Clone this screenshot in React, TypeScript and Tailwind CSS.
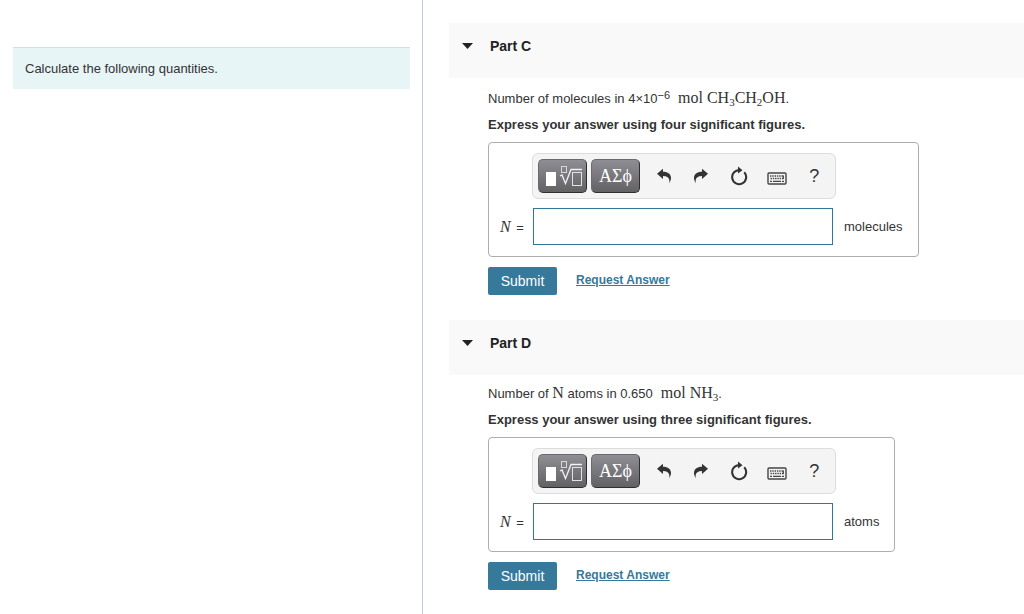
import { useState, type ReactNode } from "react";

const sans = "font-['Liberation_Sans',Arial,sans-serif]";
const serif = "font-['Liberation_Serif','Times_New_Roman',serif]";

function TemplatesIcon() {
  return (
    <svg width="39" height="24" viewBox="0 0 39 24" fill="none" aria-hidden="true">
      <rect x="3" y="8" width="10" height="14" fill="#fff" />
      <rect x="18.5" y="2.5" width="5" height="6" stroke="#d8d8da" />
      <path d="M17 12l2-1 3.5 8.5L28 5.5h12" stroke="#f2f2f2" strokeWidth="1.3" />
      <rect x="29.5" y="8.5" width="9" height="13" stroke="#e2e2e4" />
    </svg>
  );
}

function ArrowIcon({ flip = false }: { flip?: boolean }) {
  return (
    <svg width="14" height="16" viewBox="0 0 14 16" fill="#333" className={flip ? "-scale-x-100" : ""} aria-hidden="true">
      <path d="M0 5.8L6 .8v3c5 0 8 2.400 8 6.300 0 2-.8 3.700-2 5.200.3-1 .5-2 .4-3-.3-2.600-2.400-4.400-6.400-4.400v3z" />
    </svg>
  );
}

function ResetIcon() {
  return (
    <svg width="18" height="20" viewBox="0 0 18 20" fill="none" aria-hidden="true">
      <path d="M10 4.200A7 7 0 1 0 14.200 6.300" stroke="#333" strokeWidth="2.100" />
      <path d="M8 .6L12.500 4.200 8 7.600z" fill="#333" />
    </svg>
  );
}

function KeyboardIcon() {
  return (
    <svg width="20" height="13" viewBox="0 0 20 13" fill="none" aria-hidden="true">
      <rect x="1" y="1" width="18" height="11" rx="1" stroke="#444" strokeWidth="1.400" />
      <path d="M3 4h14M3.500 6.500h13" stroke="#444" strokeWidth="1.300" strokeDasharray="1.400 .9" />
      <path d="M16.300 3.400v3.500" stroke="#444" strokeWidth="1.200" />
      <path d="M3 9.300h2M6 9.300h8M15 9.300h2" stroke="#444" strokeWidth="1.200" />
    </svg>
  );
}

function Toolbar() {
  const dark =
    "flex h-[34px] w-[49px] items-center justify-center rounded-[5px] border border-t-[#6a6a6e] border-l-[#6a6a6e] border-r-[#2f2f31] border-b-[#2f2f31] bg-linear-to-b from-[#8f8e94] to-[#626265] text-white";
  const plain = "flex h-8 flex-1 items-center justify-center";

  return (
    <div className="flex h-[46px] w-[304px] items-center rounded-[6px] border border-[#dcdcdc] bg-[#f4f4f4] pr-[2px] pl-[5px]">
      <button type="button" aria-label="Templates" className={dark}>
        <TemplatesIcon />
      </button>
      <button type="button" aria-label="Symbols" className={`${dark} ${serif} ml-1 text-[18px]`}>
        ΑΣϕ
      </button>
      <div className="ml-[5px] flex flex-1 items-center">
        <button type="button" aria-label="Undo" className={plain}>
          <ArrowIcon />
        </button>
        <button type="button" aria-label="Redo" className={plain}>
          <ArrowIcon flip />
        </button>
        <button type="button" aria-label="Reset" className={plain}>
          <ResetIcon />
        </button>
        <button type="button" aria-label="Keyboard shortcuts" className={`${plain} pt-1`}>
          <KeyboardIcon />
        </button>
        <button type="button" aria-label="Help" className={`${plain} text-[18px]`}>
          ?
        </button>
      </div>
    </div>
  );
}

type PartProps = {
  id: string;
  title: string;
  question: ReactNode;
  hint: string;
  unit: string;
};

function Part({ id, title, question, hint, unit }: PartProps) {
  const [open, setOpen] = useState(true);
  const [answer, setAnswer] = useState("");

  return (
    <section className="pb-[25px]">
      <h2 className="h-[55px] bg-[#f9f9f9] pt-[13px] pl-[13px]">
        <button type="button" aria-expanded={open} onClick={() => setOpen(!open)} className="flex items-center text-[14px] leading-5 font-bold text-[#222]">
          <svg width="11" height="6" viewBox="0 0 11 6" aria-hidden="true">
            <path d="M0 0h11L5.500 6z" fill="#222" />
          </svg>
          <span className="ml-[17px]">{title}</span>
        </button>
      </h2>

      {open && (
        <div className="pt-2 pl-[39px]">
          {question}
          <p className="mt-[7px] leading-5 font-bold">{hint}</p>

          <div className="mt-[7px] w-fit rounded-[4px] border border-[#adadad] pt-[10px] pr-[15px] pb-[11px] pl-[11px]">
            <div className="ml-8">
              <Toolbar />
            </div>
            <div className="mt-[9px] flex items-center">
              <label htmlFor={id} className="w-[33px]">
                <i className={`${serif} mr-[2px] text-[16px]`}>N</i> =
              </label>
              <input
                id={id}
                value={answer}
                onChange={(e) => setAnswer(e.target.value)}
                className="h-[37px] w-[300px] border border-[#2f7699] bg-white px-2 outline-none"
              />
              <span className="ml-[11px]">{unit}</span>
            </div>
          </div>

          <div className="mt-[10px] flex items-center">
            <button type="submit" className="h-7 w-[69px] rounded-[2px] bg-[#36799b] text-[14px] text-white">
              Submit
            </button>
            <a href="#" className="ml-[19px] pb-[2px] text-[12px] font-bold text-[#36799b] underline">
              Request Answer
            </a>
          </div>
        </div>
      )}
    </section>
  );
}

export default function App() {
  const math = `${serif} text-[16px]`;
  const sub = "relative top-[3px] text-[11px]";

  return (
    <div className={`grid min-h-screen grid-cols-[423fr_601fr] bg-white text-[13px] text-[#333] ${sans}`}>
      <aside className="border-r border-[#bccbe0] pt-[47px] pr-3 pl-[13px]">
        <p className="border-t border-[#d5dfe0] bg-[#e8f5f7] py-[11px] pl-3 leading-[19px]">Calculate the following quantities.</p>
      </aside>

      <main className="pt-[23px] pl-[26px]">
        <Part
          id="part-c"
          title="Part C"
          question={
            <p className="h-[22px] leading-6">
              Number of molecules in 4×10<span className="relative -top-1 text-[11px]">−6</span>
              <span className={`${math} ml-2`}>
                mol CH<span className={sub}>3</span>CH<span className={sub}>2</span>OH
              </span>
              .
            </p>
          }
          hint="Express your answer using four significant figures."
          unit="molecules"
        />
        <Part
          id="part-d"
          title="Part D"
          question={
            <p className="h-5 leading-5">
              Number of <span className={math}>N</span> atoms in 0.650
              <span className={`${math} ml-2`}>
                mol NH<span className={sub}>3</span>
              </span>
              .
            </p>
          }
          hint="Express your answer using three significant figures."
          unit="atoms"
        />
      </main>
    </div>
  );
}
